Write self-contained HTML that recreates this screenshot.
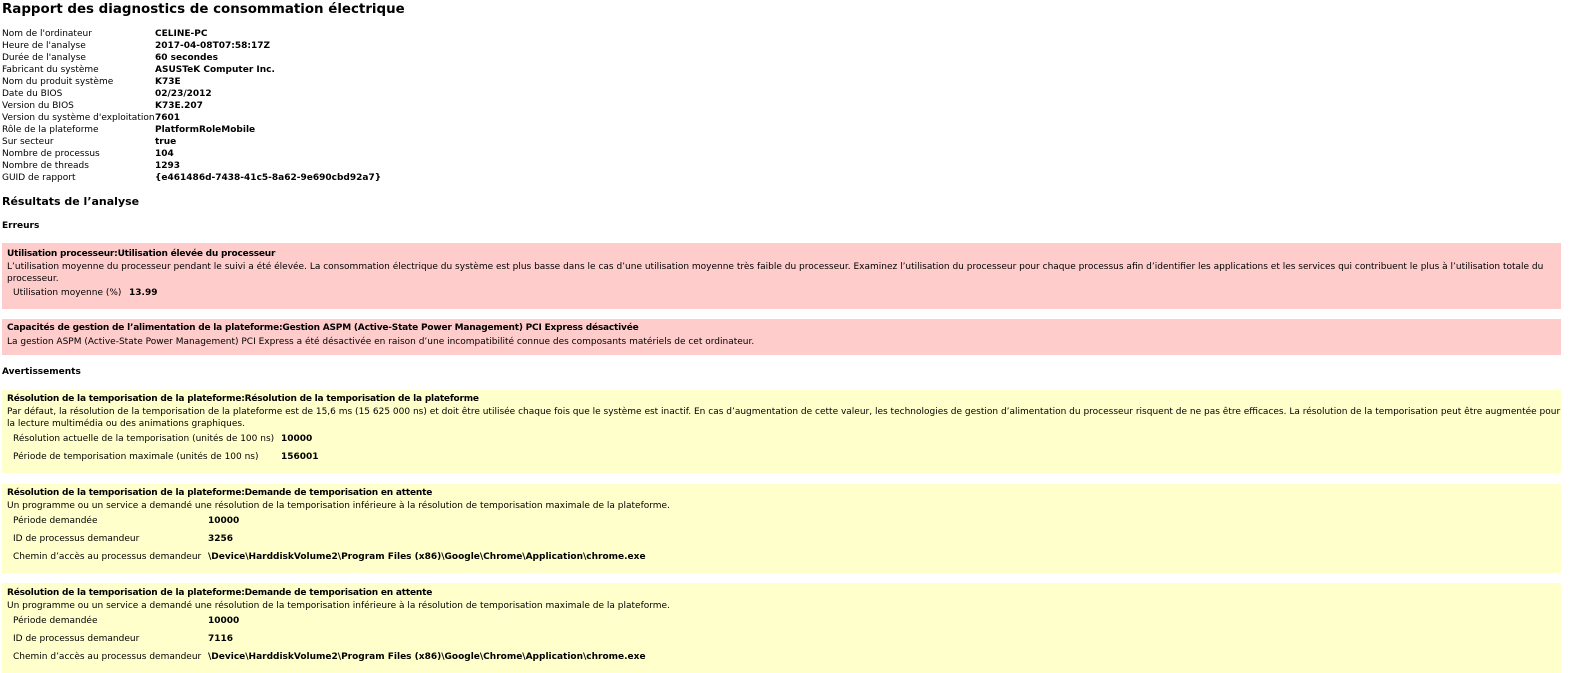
<!DOCTYPE html>
<html><head><meta charset="utf-8"><style>
body{margin:0;width:1571px;height:673px;overflow:hidden;background:#fff;font-family:"DejaVu Sans","Liberation Sans",sans-serif;font-size:9px;color:#000;position:relative}
.a{position:absolute;white-space:nowrap;line-height:12px}
.b{font-weight:bold}
.box{position:absolute;left:2px;width:1559px}
.p{background:#ffcccc}.y{background:#ffffcc}
h1{position:absolute;left:2px;top:0;margin:0;font-size:13.4px;line-height:20px;font-weight:bold;white-space:nowrap}
.h2{font-size:11px;font-weight:bold}
.t{letter-spacing:-0.2px}
</style></head><body>
<h1>Rapport des diagnostics de consommation électrique</h1>
<div class="a" style="left:2px;top:28px">Nom de l'ordinateur<br>Heure de l'analyse<br>Durée de l'analyse<br>Fabricant du système<br>Nom du produit système<br>Date du BIOS<br>Version du BIOS<br>Version du système d'exploitation<br>Rôle de la plateforme<br>Sur secteur<br>Nombre de processus<br>Nombre de threads<br>GUID de rapport</div>
<div class="a b" style="left:155px;top:28px">CELINE-PC<br>2017-04-08T07:58:17Z<br>60 secondes<br>ASUSTeK Computer Inc.<br>K73E<br>02/23/2012<br>K73E.207<br>7601<br>PlatformRoleMobile<br>true<br>104<br>1293<br>{e461486d-7438-41c5-8a62-9e690cbd92a7}</div>
<div class="a h2" style="left:2px;top:196px">Résultats de l’analyse</div>
<div class="a b" style="left:2px;top:220px">Erreurs</div>

<div class="box p" style="top:243px;height:66px"></div>
<div class="a b t" style="left:7px;top:248px">Utilisation processeur:Utilisation élevée du processeur</div>
<div class="a" style="left:7px;top:261px">L’utilisation moyenne du processeur pendant le suivi a été élevée. La consommation électrique du système est plus basse dans le cas d’une utilisation moyenne très faible du processeur. Examinez l’utilisation du processeur pour chaque processus afin d’identifier les applications et les services qui contribuent le plus à l’utilisation totale du<br>processeur.</div>
<div class="a" style="left:13px;top:287px">Utilisation moyenne (%)</div><div class="a b" style="left:129px;top:287px">13.99</div>

<div class="box p" style="top:319px;height:36px"></div>
<div class="a b t" style="left:7px;top:322px">Capacités de gestion de l’alimentation de la plateforme:Gestion ASPM (Active-State Power Management) PCI Express désactivée</div>
<div class="a" style="left:7px;top:336px">La gestion ASPM (Active-State Power Management) PCI Express a été désactivée en raison d’une incompatibilité connue des composants matériels de cet ordinateur.</div>

<div class="a b" style="left:2px;top:366px">Avertissements</div>

<div class="box y" style="top:390px;height:83px"></div>
<div class="a b t" style="left:7px;top:393px">Résolution de la temporisation de la plateforme:Résolution de la temporisation de la plateforme</div>
<div class="a" style="left:7px;top:406px">Par défaut, la résolution de la temporisation de la plateforme est de 15,6 ms (15 625 000 ns) et doit être utilisée chaque fois que le système est inactif. En cas d’augmentation de cette valeur, les technologies de gestion d’alimentation du processeur risquent de ne pas être efficaces. La résolution de la temporisation peut être augmentée pour<br>la lecture multimédia ou des animations graphiques.</div>
<div class="a" style="left:13px;top:433px">Résolution actuelle de la temporisation (unités de 100 ns)</div><div class="a b" style="left:281px;top:433px">10000</div>
<div class="a" style="left:13px;top:451px">Période de temporisation maximale (unités de 100 ns)</div><div class="a b" style="left:281px;top:451px">156001</div>

<div class="box y" style="top:484px;height:89px"></div>
<div class="a b t" style="left:7px;top:487px">Résolution de la temporisation de la plateforme:Demande de temporisation en attente</div>
<div class="a" style="left:7px;top:500px">Un programme ou un service a demandé une résolution de la temporisation inférieure à la résolution de temporisation maximale de la plateforme.</div>
<div class="a" style="left:13px;top:515px">Période demandée</div><div class="a b" style="left:208px;top:515px">10000</div>
<div class="a" style="left:13px;top:533px">ID de processus demandeur</div><div class="a b" style="left:208px;top:533px">3256</div>
<div class="a" style="left:13px;top:551px">Chemin d’accès au processus demandeur</div><div class="a b" style="left:208px;top:551px">\Device\HarddiskVolume2\Program Files (x86)\Google\Chrome\Application\chrome.exe</div>

<div class="box y" style="top:583px;height:90px"></div>
<div class="a b t" style="left:7px;top:587px">Résolution de la temporisation de la plateforme:Demande de temporisation en attente</div>
<div class="a" style="left:7px;top:600px">Un programme ou un service a demandé une résolution de la temporisation inférieure à la résolution de temporisation maximale de la plateforme.</div>
<div class="a" style="left:13px;top:615px">Période demandée</div><div class="a b" style="left:208px;top:615px">10000</div>
<div class="a" style="left:13px;top:633px">ID de processus demandeur</div><div class="a b" style="left:208px;top:633px">7116</div>
<div class="a" style="left:13px;top:651px">Chemin d’accès au processus demandeur</div><div class="a b" style="left:208px;top:651px">\Device\HarddiskVolume2\Program Files (x86)\Google\Chrome\Application\chrome.exe</div>
</body></html>
